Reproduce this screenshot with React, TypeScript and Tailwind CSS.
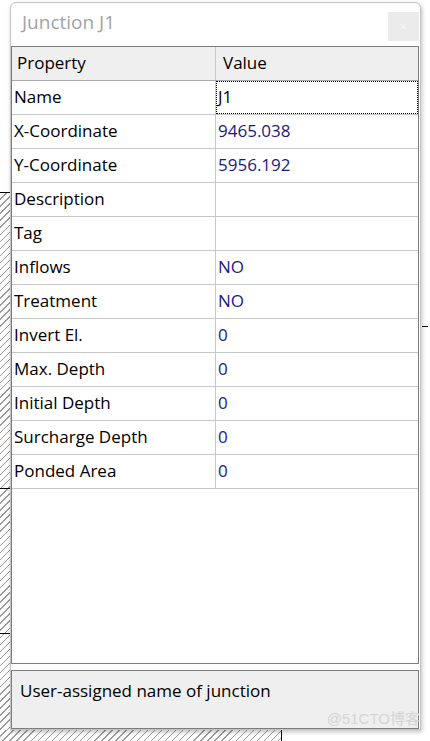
import React from "react";

const rows: [string, string, boolean][] = [
  ["Name", "J1", false],
  ["X-Coordinate", "9465.038", true],
  ["Y-Coordinate", "5956.192", true],
  ["Description", "", true],
  ["Tag", "", true],
  ["Inflows", "NO", true],
  ["Treatment", "NO", true],
  ["Invert El.", "0", true],
  ["Max. Depth", "0", true],
  ["Initial Depth", "0", true],
  ["Surcharge Depth", "0", true],
  ["Ponded Area", "0", true],
];

const hatch =
  "bg-[repeating-linear-gradient(135deg,#ffffff_0px,#ffffff_4px,#9a9a9a_4px,#9a9a9a_5px)]";

export default function App() {
  return (
    <div
      className="relative w-[430px] h-[741px] bg-white overflow-hidden"
      style={{ fontFamily: '"Open Sans", "Noto Sans", sans-serif' }}
    >
      {/* background map pieces */}
      <div className={`absolute left-0 top-[192px] w-[10px] h-[560px] border-t border-black ${hatch}`} />
      <div className="absolute left-0 top-[488px] w-[10px] h-px bg-black" />
      <div className="absolute left-0 top-[633px] w-[10px] h-px bg-black" />
      <div className={`absolute left-0 top-[730px] w-[282px] h-[20px] border-r border-black ${hatch}`} />
      <div className="absolute left-[422px] top-[326px] w-[6px] h-px bg-black" />

      {/* window */}
      <div className="absolute left-[10px] top-[2px] w-[411px] h-[728px] rounded-t-[6px] border border-[#c4c4c4] bg-white shadow-[1px_2px_4px_rgba(0,0,0,0.25)] flex flex-col">
        <div className="h-[43px] flex items-start justify-between">
          <div className="pl-[11px] pt-[6px] text-[19px] text-[#a3a3a3] leading-[26px]">Junction J1</div>
          <div className="mt-[9px] mr-[1px] w-[31px] h-[29px] bg-[#ebebeb] flex items-center justify-center text-[13px] text-[#fafafa]">
            ×
          </div>
        </div>
        <div className="flex-1 flex flex-col">
          <div className="h-[618px] mr-[1px] border border-[#7c7c7c] bg-white flex flex-col">
            <div className="h-[34px] flex bg-[#efefef] border-b border-[#a8a8a8] text-[17px] text-black">
              <div className="w-[204px] border-r border-[#c8c8c8] pl-[5px] pb-[1px] flex items-center">Property</div>
              <div className="flex-1 pl-[7px] pb-[1px] flex items-center">Value</div>
            </div>
            {rows.map(([k, v, blue], i) => (
              <div key={k} className="h-[34px] flex border-b border-[#c8c8c8] text-[17px]">
                <div className="w-[204px] border-r border-[#c8c8c8] pl-[2px] pb-[2px] flex items-center text-black">{k}</div>
                {i === 0 ? (
                  <div className="flex-1 flex items-center pl-[1px] pb-[2px] border border-dotted border-black text-black">{v}</div>
                ) : (
                  <div className={`flex-1 flex items-center pl-[2px] pb-[2px] ${blue ? "text-[#1a1a80]" : "text-black"}`}>{v}</div>
                )}
              </div>
            ))}
          </div>
          <div className="mt-[6px] mr-[1px] flex-1 border border-[#7c7c7c] bg-[#efefef] pl-[8px] pt-[7px] text-[17px] text-black relative">
            User-assigned name of junction
            <div className="absolute right-[-2px] bottom-[-2px] text-[15px] text-[#d4d4d4]" style={{ fontFamily: '"Liberation Sans", "Noto Sans CJK SC", sans-serif' }}>
              @51CTO博客
            </div>
          </div>
        </div>
      </div>
    </div>
  );
}
